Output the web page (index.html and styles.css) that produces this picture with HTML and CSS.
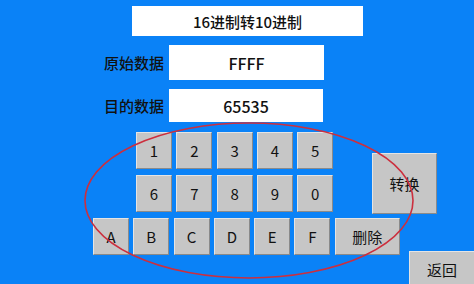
FILE: index.html
```html
<!DOCTYPE html>
<html>
<head>
<meta charset="utf-8">
<link rel="stylesheet" href="styles.css">
</head>
<body>
<div class="screen">
  <div class="title">16进制转10进制</div>
  <div class="field-row first">
    <span class="label">原始数据</span>
    <div class="box box-src">FFFF</div>
  </div>
  <div class="field-row second">
    <span class="label">目的数据</span>
    <div class="box box-dst">65535</div>
  </div>
  <div class="pad">
    <div class="keys">
      <div class="row row-num">
        <div class="key">1</div><div class="key">2</div><div class="key">3</div><div class="key">4</div><div class="key">5</div>
      </div>
      <div class="row row-num">
        <div class="key">6</div><div class="key">7</div><div class="key">8</div><div class="key">9</div><div class="key">0</div>
      </div>
      <div class="row row-hex">
        <div class="key">A</div><div class="key">B</div><div class="key">C</div><div class="key">D</div><div class="key">E</div><div class="key">F</div><div class="key key-del">删除</div>
      </div>
    </div>
    <div class="side">
      <div class="key key-conv">转换</div>
      <div class="key key-back">返回</div>
    </div>
  </div>
  <svg class="ring" width="474" height="284" viewBox="0 0 474 284">
    <ellipse cx="249" cy="200.5" rx="164" ry="77.5" fill="none" stroke="#cc2f3e" stroke-width="1.6"/>
  </svg>
</div>
</body>
</html>
```
FILE: styles.css
```css
html, body {
  margin: 0;
  padding: 0;
}
body {
  width: 474px;
  height: 284px;
  overflow: hidden;
  background: #0a82f7;
  font-family: "Noto Sans CJK SC", "Noto Sans", sans-serif;
  color: #111;
}
.screen {
  position: relative;
  width: 474px;
  height: 284px;
  padding-top: 6px;
  box-sizing: border-box;
}
.title {
  margin-left: 132px;
  width: 231px;
  height: 30px;
  background: #fff;
  display: flex;
  align-items: center;
  justify-content: center;
  font-size: 15px;
  font-weight: 500;
}
.field-row {
  display: flex;
  align-items: center;
  margin-top: 9px;
}
.label {
  width: 169px;
  text-align: right;
  padding-right: 5px;
  box-sizing: border-box;
  font-size: 15px;
  font-weight: 500;
}
.box {
  background: #fff;
  display: flex;
  align-items: center;
  justify-content: center;
  font-size: 16px;
  font-weight: 500;
}
.box-src {
  width: 155px;
  height: 35px;
}
.box-dst {
  width: 154px;
  height: 33px;
}
.pad {
  display: flex;
  margin-top: 10px;
}
.keys {
  width: 372px;
  flex-shrink: 0;
}
.row {
  display: flex;
  gap: 4.3px;
  width: max-content;
}
.row-num {
  margin-left: 136px;
  margin-bottom: 6px;
}
.row-hex {
  margin-left: 93px;
  margin-top: 1px;
}
.key {
  width: 36px;
  height: 37px;
  flex-shrink: 0;
  box-sizing: border-box;
  background: #c6c6c6;
  border-top: 1px solid #e4e4e4;
  border-left: 1px solid #e4e4e4;
  border-right: 1px solid #8a8a8a;
  border-bottom: 1px solid #8a8a8a;
  display: flex;
  align-items: center;
  justify-content: center;
  font-size: 15px;
  color: #111;
}
.key-del {
  width: 65px;
}
.side {
  display: flex;
  flex-direction: column;
  padding-top: 21px;
}
.key-conv {
  width: 65px;
  height: 61px;
}
.key-back {
  width: 66px;
  height: 36px;
  margin-top: 37px;
  margin-left: 37px;
}
.ring {
  position: absolute;
  left: 0;
  top: 0;
  pointer-events: none;
}
```
